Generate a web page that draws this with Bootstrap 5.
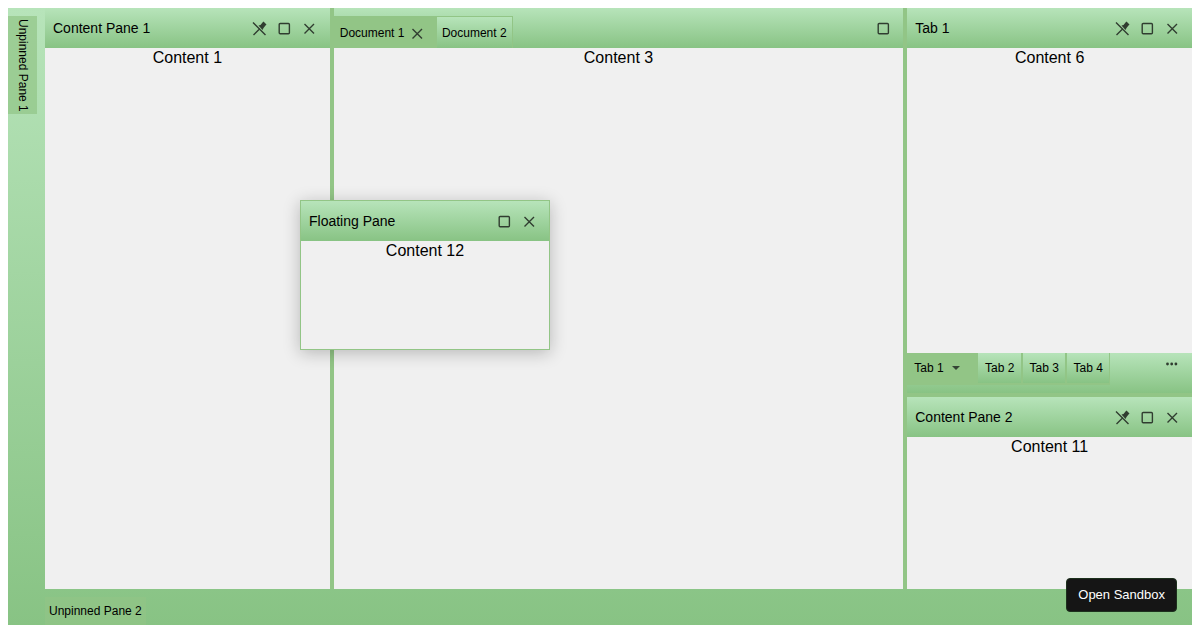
<!DOCTYPE html>
<html lang="en">
<head>
<meta charset="utf-8">
<meta name="viewport" content="width=device-width, initial-scale=1">
<title>Dock Manager</title>
<link href="https://cdn.jsdelivr.net/npm/bootstrap@5.3.0/dist/css/bootstrap.min.css" rel="stylesheet">
<style>
  :root { --dock-line: #92c586; --dock-top: #b7e4ba; --dock-bottom: #88c384; --dock-fill: linear-gradient(to bottom, var(--dock-top), var(--dock-bottom)); }
  body { font-family: "Liberation Sans", Arial, sans-serif; font-size: 16px; line-height: 19px; color: #000; background: #fff; padding: 8px 8px 5px; }
  .dock { background: var(--dock-fill); }
  button { font: inherit; color: inherit; border: 0; background: none; padding: 0; }
  .dock-rail { width: 37px; padding-top: 8px; }
  .unpinned { font-size: 12px; line-height: 14px; background: #92c586b3; }
  .unpinned-v { writing-mode: vertical-rl; width: 29px; height: 98px; }
  .dock-foot { height: 36px; padding: 8px 0 0 37px; }
  .unpinned-h { padding: 0 4px; height: 28px; }
  .split-v { width: 4px; background: var(--dock-line); }
  .split-h { height: 4px; background: var(--dock-line); }
  .area { flex: 1 1 0; }
  .area-wide { flex: 2 1 0; }
  .pane-head { height: 40px; padding: 0 8px; background: var(--dock-fill); font-size: 14px; line-height: 16px; }
  .pane-head h2 { font-size: 14px; line-height: 16px; font-weight: 400; }
  .pane-body { background: #f0f0f0; }
  .tool { width: 25px; height: 24px; color: #303d30; }
  .tool svg { width: 16px; height: 16px; display: block; margin: auto; fill: none; stroke: currentColor; stroke-width: 1.4; }
  .doc-tabs { padding: 8px 0 0; }
  .dock-tab { font-size: 12px; line-height: 14px; background: var(--dock-fill); }
  .dock-tab.active { background: var(--dock-line); }
  .doc-tab { height: 32px; width: 76px; border: 1px solid var(--dock-line); border-bottom: 0; border-left: 0; }
  .doc-tab.active { width: 103px; padding: 0 2px 0 6px; }
  .tab-strip { height: 40px; background: var(--dock-fill); }
  .strip-tab { height: 32px; width: 44px; border: 1px solid var(--dock-line); border-width: 0 1px 2px 0; }
  .strip-tab + .strip-tab + .strip-tab { border-left-width: 1px; }
  .strip-tab.active { width: 71px; padding: 0 7px; }
  .floating { position: absolute; left: 300px; top: 200px; width: 250px; height: 150px; border: 1px solid var(--dock-line); box-shadow: 0 3px 16px rgba(0,0,0,.24); }
  .sandbox { position: fixed; right: 23px; bottom: 18px; font-size: 13px; line-height: 16px; padding: 8px 11px; color: #fff; background: #151515; border: 1px solid #1d301d; border-radius: 4px; }
</style>
</head>
<body class="vh-100 overflow-hidden">
<svg class="d-none" aria-hidden="true">
  <symbol id="unpin" viewBox="0 0 16 16"><path d="M2 2.500l12.500 12.500M2.500 15l6.500-6.500"/><path d="M7.500 5.500l2-.5 2-2.500 1-1 3 3-1 1-2 2.500-1 2z" fill="currentColor" stroke="none"/></symbol>
  <symbol id="max" viewBox="0 0 16 16"><rect x="3.200" y="3.500" width="10.200" height="10.200" rx="1"/></symbol>
  <symbol id="close" viewBox="0 0 16 16"><path d="M3.500 4l9.500 9.500M13 4l-9.500 9.500"/></symbol>
</svg>
<div class="dock h-100 d-flex flex-column">
  <div class="d-flex flex-grow-1">
    <aside class="dock-rail"><button class="unpinned unpinned-v">Unpinned Pane 1</button></aside>
    <main class="d-flex flex-grow-1">
      <section class="area d-flex flex-column">
        <header class="pane-head d-flex align-items-center"><h2 class="m-0 me-auto">Content Pane 1</h2>
          <button class="tool" aria-label="Unpin"><svg><use href="#unpin"/></svg></button><button class="tool" aria-label="Maximize"><svg><use href="#max"/></svg></button><button class="tool" aria-label="Close"><svg><use href="#close"/></svg></button></header>
        <div class="pane-body flex-grow-1 text-center">Content 1</div>
      </section>
      <div class="split-v"></div>
      <section class="area-wide d-flex flex-column">
        <header class="pane-head doc-tabs d-flex">
          <div class="dock-tab doc-tab active d-flex align-items-center"><button>Document 1</button><button class="tool" aria-label="Close document"><svg><use href="#close"/></svg></button></div>
          <button class="dock-tab doc-tab">Document 2</button>
          <button class="tool ms-auto me-2" aria-label="Maximize"><svg class="mt-0"><use href="#max"/></svg></button>
        </header>
        <div class="pane-body flex-grow-1 text-center">Content 3</div>
      </section>
      <div class="split-v"></div>
      <div class="area d-flex flex-column">
        <section class="area-wide d-flex flex-column">
          <header class="pane-head d-flex align-items-center"><h2 class="m-0 me-auto">Tab 1</h2>
            <button class="tool" aria-label="Unpin"><svg><use href="#unpin"/></svg></button><button class="tool" aria-label="Maximize"><svg><use href="#max"/></svg></button><button class="tool" aria-label="Close"><svg><use href="#close"/></svg></button></header>
          <div class="pane-body flex-grow-1 text-center">Content 6</div>
          <nav class="tab-strip d-flex pe-2">
            <button class="dock-tab strip-tab active d-flex align-items-center gap-2">Tab 1<svg width="8" height="4" viewBox="0 0 8 4"><path d="M0 0h8L4 4z" fill="#354435"/></svg></button>
            <button class="dock-tab strip-tab">Tab 2</button><button class="dock-tab strip-tab">Tab 3</button><button class="dock-tab strip-tab">Tab 4</button>
            <button class="tool ms-auto" aria-label="More tabs"><svg viewBox="0 0 16 16"><g fill="currentColor" stroke="none"><circle cx="3.500" cy="7" r="1.400"/><circle cx="7.700" cy="7" r="1.400"/><circle cx="11.900" cy="7" r="1.400"/></g></svg></button>
          </nav>
        </section>
        <div class="split-h"></div>
        <section class="area d-flex flex-column">
          <header class="pane-head d-flex align-items-center"><h2 class="m-0 me-auto">Content Pane 2</h2>
            <button class="tool" aria-label="Unpin"><svg><use href="#unpin"/></svg></button><button class="tool" aria-label="Maximize"><svg><use href="#max"/></svg></button><button class="tool" aria-label="Close"><svg><use href="#close"/></svg></button></header>
          <div class="pane-body flex-grow-1 text-center">Content 11</div>
        </section>
      </div>
    </main>
  </div>
  <footer class="dock-foot"><button class="unpinned unpinned-h">Unpinned Pane 2</button></footer>
</div>
<section class="floating d-flex flex-column">
  <header class="pane-head d-flex align-items-center"><h2 class="m-0 me-auto">Floating Pane</h2>
    <button class="tool" aria-label="Maximize"><svg><use href="#max"/></svg></button><button class="tool" aria-label="Close"><svg><use href="#close"/></svg></button></header>
  <div class="pane-body flex-grow-1 text-center">Content 12</div>
</section>
<button class="sandbox">Open Sandbox</button>
<script src="https://cdn.jsdelivr.net/npm/bootstrap@5.3.0/dist/js/bootstrap.bundle.min.js"></script>
</body>
</html>
